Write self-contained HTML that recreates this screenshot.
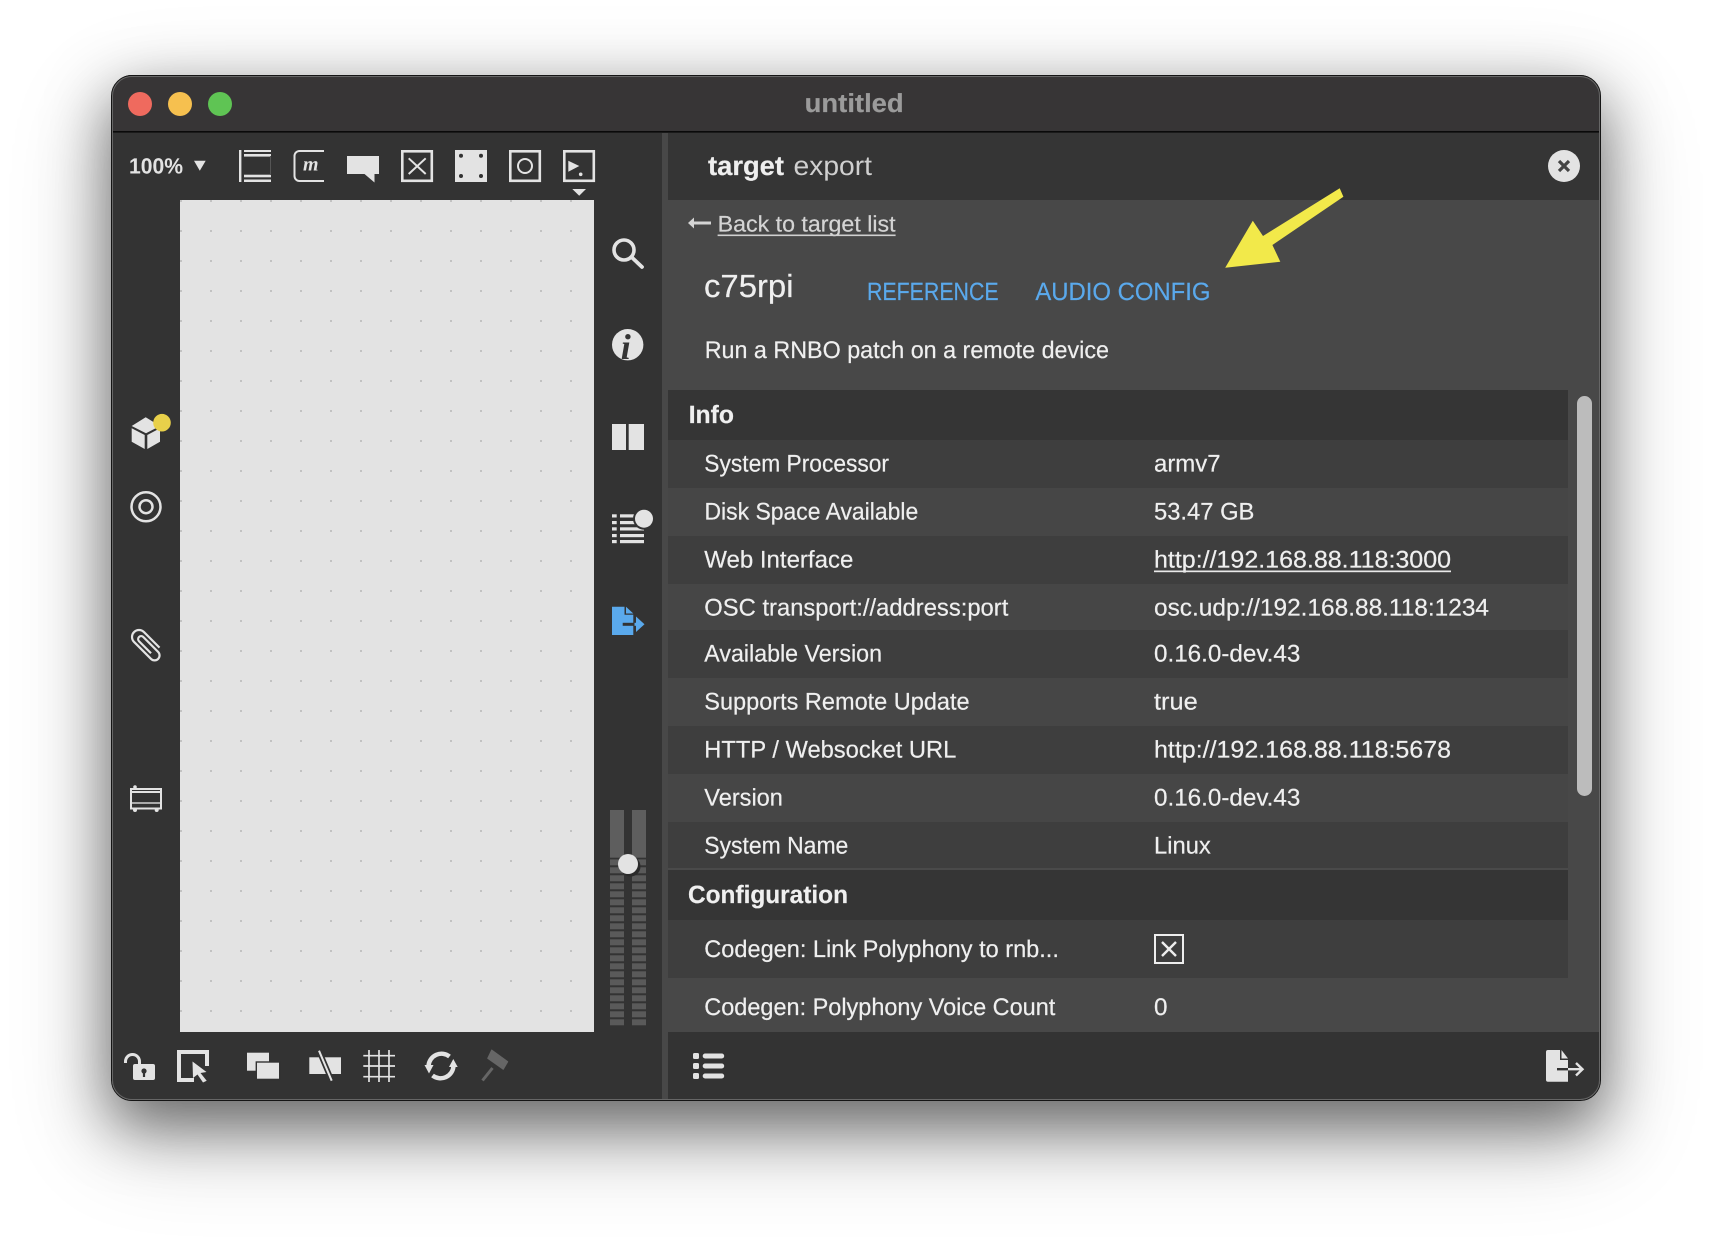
<!DOCTYPE html>
<html lang="en">
<head>
<meta charset="utf-8">
<title>untitled</title>
<style>
html,body{margin:0;padding:0;background:#fff;width:1712px;height:1248px;overflow:hidden}
#sh{position:absolute;left:112px;top:75px;width:1488px;height:1025px;border-radius:20px;box-shadow:0 24px 60px 2px rgba(0,0,0,.5),0 34px 100px 6px rgba(0,0,0,.2)}
svg{position:absolute;left:0;top:0}
text{font-family:"Liberation Sans",sans-serif;fill:#efefef;font-size:24px;text-rendering:geometricPrecision;stroke:#efefef;stroke-width:.2px}
.b{font-weight:700}
.l{fill:#5aa9ec;font-size:25px;stroke:#5aa9ec}
</style>
</head>
<body>
<div id="sh"></div>
<svg width="1712" height="1248" viewBox="0 0 1712 1248" xmlns="http://www.w3.org/2000/svg">
<defs>
<clipPath id="w"><rect x="112" y="75" width="1488" height="1025" rx="20"/></clipPath>
<pattern id="dots" x="180" y="200" width="30" height="30" patternUnits="userSpaceOnUse"><rect width="2" height="2" fill="#c2c2c2"/></pattern>
<pattern id="seg" x="0" y="859.3" width="8" height="8" patternUnits="userSpaceOnUse"><rect width="8" height="6" fill="#5a5a5a"/></pattern>
</defs>
<g clip-path="url(#w)">
<rect x="112" y="75" width="1488" height="1025" fill="#333"/>
<rect x="112" y="75" width="1488" height="57" fill="#373536"/>
<rect x="112" y="131" width="1488" height="1.6" fill="#0a0a0a"/>
<rect x="662" y="133" width="6" height="967" fill="#484848"/>
<rect x="668" y="133" width="932" height="67" fill="#353535"/>
<rect x="668" y="200" width="932" height="832" fill="#484848"/>
<rect x="668" y="390" width="900" height="50" fill="#353535"/>
<rect x="668" y="440" width="900" height="48" fill="#3e3e3e"/>
<rect x="668" y="488" width="900" height="48" fill="#464646"/>
<rect x="668" y="536" width="900" height="48" fill="#3e3e3e"/>
<rect x="668" y="584" width="900" height="46" fill="#464646"/>
<rect x="668" y="630" width="900" height="48" fill="#3e3e3e"/>
<rect x="668" y="678" width="900" height="48" fill="#464646"/>
<rect x="668" y="726" width="900" height="48" fill="#3e3e3e"/>
<rect x="668" y="774" width="900" height="48" fill="#464646"/>
<rect x="668" y="822" width="900" height="46" fill="#3e3e3e"/>
<rect x="668" y="868" width="900" height="2" fill="#4a4a4a"/>
<rect x="668" y="870" width="900" height="50" fill="#353535"/>
<rect x="668" y="920" width="900" height="58" fill="#3e3e3e"/>
<rect x="668" y="978" width="900" height="54" fill="#484848"/>
<rect x="1577" y="396" width="15" height="400" rx="7.5" fill="#bcbcbc"/>
</g>
<rect x="111.5" y="75.5" width="1489" height="1025" rx="20.5" fill="none" stroke="#151515"/>
<rect x="112.5" y="76.5" width="1487" height="1023" rx="19.5" fill="none" stroke="#666"/>

<circle cx="140" cy="104" r="12" fill="#ef6a5e"/>
<circle cx="180" cy="104" r="12" fill="#f6c04f"/>
<circle cx="220" cy="104" r="12" fill="#5fc454"/>
<text x="804.7" y="112" class="b" style="fill:#9b9b9b;stroke:#9b9b9b;font-size:26px" textLength="99" lengthAdjust="spacingAndGlyphs">untitled</text>

<!-- top toolbar -->
<text x="129" y="173.5" class="b" style="font-size:22px;fill:#e3e3e3;stroke:none" textLength="54" lengthAdjust="spacingAndGlyphs">100%</text>
<polygon points="194,160.7 205.7,160.7 199.8,170.7" fill="#e3e3e3"/>
<g fill="#e3e3e3">
<rect x="239" y="150" width="2.4" height="32"/>
<rect x="244" y="150" width="27" height="2"/>
<rect x="244" y="154" width="27" height="2.6"/>
<rect x="244" y="174.7" width="27" height="2.6"/>
<rect x="244" y="179.5" width="27" height="2.5"/>
<rect x="270" y="156" width="1" height="19" fill="#555"/>
</g>
<path d="M324,151H299.5a5,5 0 0 0 -5,5V176a5,5 0 0 0 5,5H324" fill="none" stroke="#e3e3e3" stroke-width="2"/>
<text x="303" y="170.5" style="font-family:'Liberation Serif',serif;font-style:italic;font-weight:700;font-size:20px;fill:#e3e3e3;stroke:none" textLength="15.5" lengthAdjust="spacingAndGlyphs">m</text>
<polygon points="347,156 379,156 379,174 374.5,174 374.5,182.5 364.5,174 347,174" fill="#e3e3e3"/>
<rect x="402.3" y="151.3" width="29.5" height="29.5" fill="none" stroke="#e3e3e3" stroke-width="2.6"/>
<path d="M408.7,158.3L425.7,174M425.7,158.3L408.7,174" stroke="#e3e3e3" stroke-width="2" fill="none"/>
<rect x="455" y="150" width="32" height="32" fill="#e3e3e3"/>
<g fill="#333"><circle cx="461" cy="155.7" r="2"/><circle cx="481" cy="155.7" r="2"/><circle cx="461" cy="176" r="2"/><circle cx="481" cy="176" r="2"/></g>
<rect x="510.3" y="151.3" width="29.5" height="29.5" fill="none" stroke="#e3e3e3" stroke-width="2.6"/>
<circle cx="525" cy="166" r="7" fill="none" stroke="#e3e3e3" stroke-width="2"/>
<rect x="564.3" y="151.3" width="29.5" height="29.5" fill="none" stroke="#e3e3e3" stroke-width="2.6"/>
<polygon points="568.3,160.7 579.3,166 568.3,171.7" fill="#e3e3e3"/>
<circle cx="580.7" cy="174.3" r="1.8" fill="#e3e3e3"/>
<polygon points="572.3,189 586,189 579.2,195.7" fill="#e3e3e3"/>

<!-- canvas -->
<rect x="180" y="200" width="414" height="832" fill="#e3e3e3"/>
<rect x="180" y="200" width="414" height="832" fill="url(#dots)"/>

<!-- left sidebar -->
<g fill="#e3e3e3">
<polygon points="131.7,428.3 144.7,435 144.7,449 131.7,441.7"/>
<polygon points="147.3,435 160,428.3 160,441.7 147.3,449"/>
<polygon points="131.7,426 145.7,417.3 160,426 146,433.3"/>
</g>
<circle cx="162" cy="422.7" r="8.8" fill="#e8d04a"/>
<circle cx="146" cy="506.7" r="14.5" fill="none" stroke="#e3e3e3" stroke-width="2.5"/>
<circle cx="146" cy="506.7" r="6.5" fill="none" stroke="#e3e3e3" stroke-width="2.5"/>
<path transform="translate(147.5,645.5) rotate(-45)" d="M7,10V-12a7,7 0 0 0 -14,0V12a5,5 0 0 0 10,0V-9a3,3 0 0 0 -6,0V8" fill="none" stroke="#e3e3e3" stroke-width="2.2"/>
<rect x="131" y="789" width="30" height="19.5" fill="none" stroke="#e3e3e3" stroke-width="2"/>
<rect x="132" y="791" width="28" height="2" fill="#e3e3e3"/>
<rect x="132" y="802" width="28" height="2" fill="#aaa"/>
<g fill="#e3e3e3"><circle cx="135" cy="787" r="1.8"/><circle cx="135" cy="810" r="2"/><circle cx="156.7" cy="810" r="2"/></g>

<!-- right strip -->
<circle cx="624" cy="250" r="10" fill="none" stroke="#e3e3e3" stroke-width="3.6"/>
<path d="M632.5,258L642,267" stroke="#e3e3e3" stroke-width="3.8" stroke-linecap="round"/>
<circle cx="627.7" cy="344.7" r="15.7" fill="#e3e3e3"/>
<text x="620.8" y="359" style="font-family:'Liberation Serif',serif;font-style:italic;font-weight:700;font-size:36px;fill:#333;stroke:none">i</text>
<rect x="612" y="424" width="14" height="26" fill="#e3e3e3"/>
<rect x="628.7" y="424" width="15.3" height="26" fill="#e3e3e3"/>
<g fill="#e3e3e3">
<rect x="612" y="514.3" width="4.7" height="3.2"/><rect x="620" y="514.3" width="24" height="3.2"/>
<rect x="612" y="521" width="4.7" height="3.2"/><rect x="620" y="521" width="24" height="3.2"/>
<rect x="612" y="527.3" width="4.7" height="3.2"/><rect x="620" y="527.3" width="24" height="3.2"/>
<rect x="612" y="534" width="4.7" height="3.2"/><rect x="620" y="534" width="24" height="3.2"/>
<rect x="612" y="540" width="4.7" height="3.2"/><rect x="620" y="540" width="24" height="3.2"/>
</g>
<circle cx="644" cy="518.7" r="11" fill="#333"/>
<circle cx="644" cy="518.7" r="9" fill="#e3e3e3"/>
<polygon points="612,606.7 624.5,606.7 624.5,614.7 633.3,614.7 633.3,635 612,635" fill="#5aa9ec"/>
<polygon points="626,606.7 633.3,613.5 626,613.5" fill="#5aa9ec"/>
<rect x="622.7" y="622.8" width="12" height="3" fill="#333"/>
<rect x="634.5" y="622.8" width="3" height="3" fill="#5aa9ec"/>
<polygon points="636,616.5 644.5,624.3 636,632" fill="#5aa9ec"/>

<!-- fader -->
<rect x="610" y="810" width="14" height="47.7" fill="#5e5e5e"/>
<rect x="632" y="810" width="14" height="47.7" fill="#5e5e5e"/>
<rect x="610" y="859.3" width="14" height="167" fill="url(#seg)"/>
<rect x="632" y="859.3" width="14" height="167" fill="url(#seg)"/>
<circle cx="630.5" cy="866.5" r="10" fill="#2b2b2b"/>
<circle cx="628" cy="864" r="10" fill="#e3e3e3"/>

<!-- bottom toolbar -->
<path d="M125.5,1063v-1.5a7,7 0 0 1 14,0v3" fill="none" stroke="#e3e3e3" stroke-width="3"/>
<rect x="133" y="1064" width="22" height="16" rx="2" fill="#e3e3e3"/>
<circle cx="144" cy="1071" r="2.6" fill="#333"/>
<rect x="142.9" y="1071" width="2.2" height="6" fill="#333"/>
<polygon points="177,1050 209,1050 209,1066 205,1066 205,1054 181,1054 181,1078 194,1078 194,1082 177,1082" fill="#e3e3e3"/>
<polygon points="192.5,1061.5 206.5,1072 200.5,1073 206.7,1080.7 203,1082.5 197.5,1074.5 193,1078" fill="#e3e3e3"/>
<rect x="247" y="1052.7" width="22" height="18" fill="#e3e3e3"/>
<rect x="256.3" y="1062" width="23.4" height="17.4" fill="#e3e3e3" stroke="#333" stroke-width="1.4"/>
<rect x="309.3" y="1057.3" width="31.7" height="16.7" fill="#e3e3e3"/>
<path d="M319,1050.7L331.7,1080.7" stroke="#333" stroke-width="5.5"/>
<path d="M319,1050.7L331.7,1080.7" stroke="#e3e3e3" stroke-width="2"/>
<path d="M369,1050V1082M379,1050V1082M389,1050V1082M363.3,1055.7H395M363.3,1066H395M363.3,1076.7H395" stroke="#e3e3e3" stroke-width="1.7" fill="none"/>
<path d="M449.5,1056.5A13,13 0 0 0 428.5,1066M432.5,1075.5A13,13 0 0 0 453.5,1066" fill="none" stroke="#e3e3e3" stroke-width="4.4"/>
<polygon points="429,1073.5 424.5,1065 433.5,1065" fill="#e3e3e3"/>
<polygon points="453.3,1059 449,1067 457.7,1067" fill="#e3e3e3"/>
<polygon points="491.7,1050 507.7,1061.7 503.3,1069.3 487.7,1058.3" fill="#666" stroke="#666" stroke-linejoin="round"/>
<path d="M492.5,1068L482.5,1080.5" stroke="#666" stroke-width="3"/>

<!-- header -->
<text x="708" y="175" class="b" style="font-size:27px" textLength="76" lengthAdjust="spacingAndGlyphs">target</text>
<text x="793.5" y="175" style="font-size:27px;fill:#d0d0d0;stroke:none" textLength="78.5" lengthAdjust="spacingAndGlyphs">export</text>
<circle cx="1564" cy="166" r="16" fill="#e3e3e3"/>
<path d="M1559,161L1569,171M1569,161L1559,171" stroke="#444" stroke-width="3.2"/>

<path d="M711,223H692" stroke="#d4d4d4" stroke-width="3"/>
<polygon points="688,223 694,217.5 694,228.5" fill="#d4d4d4"/>
<text x="717.6" y="231.5" style="font-size:22.5px;fill:#d4d4d4;stroke:#d4d4d4" textLength="178" lengthAdjust="spacingAndGlyphs">Back to target list</text>
<rect x="717.6" y="234.5" width="178" height="1.6" fill="#d0d0d0"/>

<text x="704" y="297" style="font-size:32px" textLength="89.5" lengthAdjust="spacingAndGlyphs">c75rpi</text>
<text x="867" y="300" class="l" textLength="131.6" lengthAdjust="spacingAndGlyphs">REFERENCE</text>
<text x="1035.4" y="300" class="l" textLength="175" lengthAdjust="spacingAndGlyphs">AUDIO CONFIG</text>
<text x="704.7" y="358" textLength="404.3" lengthAdjust="spacingAndGlyphs">Run a RNBO patch on a remote device</text>

<polygon points="1339.7,188.3 1343.4,196.7 1272.4,245 1280.3,261.7 1225.2,267.7 1252.8,220.7 1263,236" fill="#f2e94a"/>

<!-- table -->
<text x="688.7" y="423" class="b" style="font-size:25px" textLength="45.3" lengthAdjust="spacingAndGlyphs">Info</text>
<text x="704.3" y="471.5" textLength="184.7" lengthAdjust="spacingAndGlyphs">System Processor</text>
<text x="1154" y="471.5" textLength="66.6" lengthAdjust="spacingAndGlyphs">armv7</text>
<text x="704.5" y="519.5" textLength="213.7" lengthAdjust="spacingAndGlyphs">Disk Space Available</text>
<text x="1154" y="519.5" textLength="100.4" lengthAdjust="spacingAndGlyphs">53.47 GB</text>
<text x="704.3" y="567.5" textLength="149" lengthAdjust="spacingAndGlyphs">Web Interface</text>
<text x="1154" y="567.5" textLength="297" lengthAdjust="spacingAndGlyphs">http://192.168.88.118:3000</text>
<rect x="1154" y="570.5" width="297" height="1.7" fill="#e9e9e9"/>
<text x="704.3" y="615.4" textLength="304" lengthAdjust="spacingAndGlyphs">OSC transport://address:port</text>
<text x="1154" y="615.4" textLength="335" lengthAdjust="spacingAndGlyphs">osc.udp://192.168.88.118:1234</text>
<text x="704.3" y="661.7" textLength="177.7" lengthAdjust="spacingAndGlyphs">Available Version</text>
<text x="1154" y="661.7" textLength="146.3" lengthAdjust="spacingAndGlyphs">0.16.0-dev.43</text>
<text x="704.3" y="709.5" textLength="265.3" lengthAdjust="spacingAndGlyphs">Supports Remote Update</text>
<text x="1154" y="709.5" textLength="43.7" lengthAdjust="spacingAndGlyphs">true</text>
<text x="704.3" y="757.5" textLength="252" lengthAdjust="spacingAndGlyphs">HTTP / Websocket URL</text>
<text x="1154" y="757.5" textLength="297" lengthAdjust="spacingAndGlyphs">http://192.168.88.118:5678</text>
<text x="704.3" y="805.5" textLength="78.6" lengthAdjust="spacingAndGlyphs">Version</text>
<text x="1154" y="805.5" textLength="146.3" lengthAdjust="spacingAndGlyphs">0.16.0-dev.43</text>
<text x="704.3" y="853.4" textLength="144" lengthAdjust="spacingAndGlyphs">System Name</text>
<text x="1154" y="853.4" textLength="56.8" lengthAdjust="spacingAndGlyphs">Linux</text>
<text x="688" y="903" class="b" style="font-size:25px" textLength="160" lengthAdjust="spacingAndGlyphs">Configuration</text>
<text x="704.3" y="957" textLength="354.6" lengthAdjust="spacingAndGlyphs">Codegen: Link Polyphony to rnb...</text>
<rect x="1155" y="935" width="28" height="28" fill="none" stroke="#eee" stroke-width="2"/>
<path d="M1162,942L1176,956M1176,942L1162,956" stroke="#eee" stroke-width="2.4"/>
<text x="704.3" y="1015" textLength="351" lengthAdjust="spacingAndGlyphs">Codegen: Polyphony Voice Count</text>
<text x="1154" y="1015" textLength="13.5" lengthAdjust="spacingAndGlyphs">0</text>

<!-- footer icons -->
<g fill="#e3e3e3">
<rect x="693" y="1053" width="6" height="6" rx="1.5"/><rect x="693" y="1063" width="6" height="6" rx="1.5"/><rect x="693" y="1073" width="6" height="6" rx="1.5"/>
<rect x="702.7" y="1053.5" width="21.5" height="5" rx="2.5"/>
<rect x="702.7" y="1063.5" width="21.5" height="5" rx="2.5"/>
<rect x="702.7" y="1073.5" width="21.5" height="5" rx="2.5"/>
<path d="M1548,1050H1560V1060H1568V1081.7H1548a2,2 0 0 1 -2,-2V1052a2,2 0 0 1 2,-2Z"/>
<polygon points="1561.5,1050 1568,1058.5 1561.5,1058.5"/>
</g>
<rect x="1557" y="1068" width="11" height="2.4" fill="#333"/>
<path d="M1568,1069.2H1581M1576,1063L1582.5,1069.2L1576,1075.5" fill="none" stroke="#e3e3e3" stroke-width="2.4"/>
</svg>
</body>
</html>
